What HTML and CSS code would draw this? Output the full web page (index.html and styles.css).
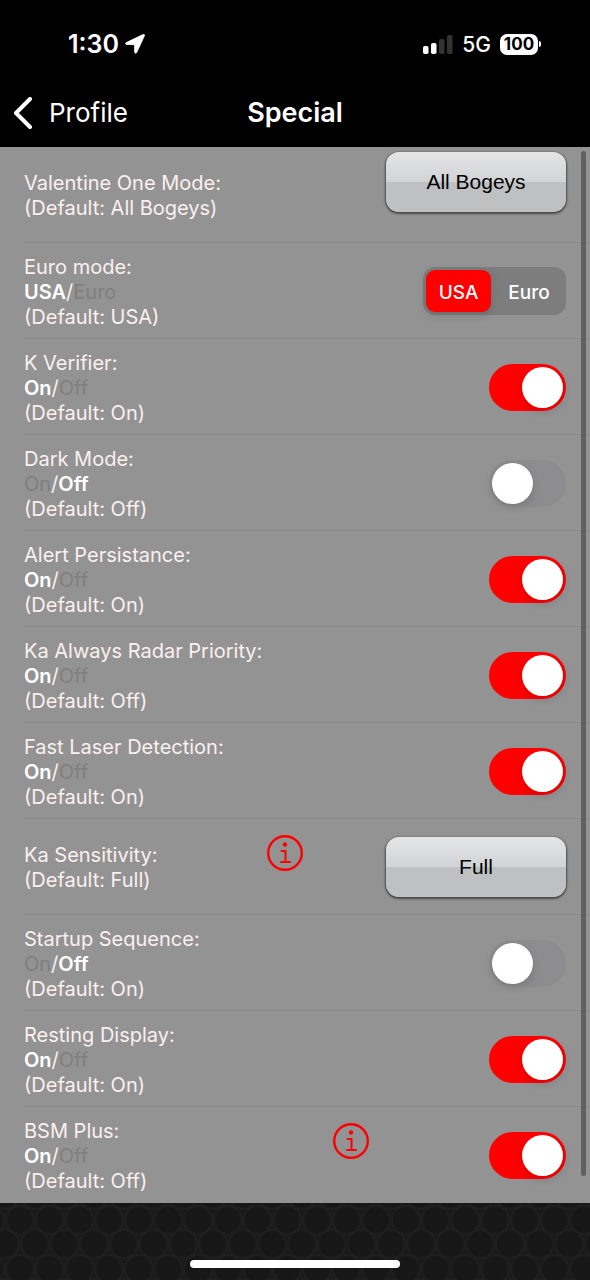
FILE: index.html
```html
<!DOCTYPE html>
<html lang="en">
<head>
<meta charset="utf-8">
<meta name="viewport" content="width=device-width, initial-scale=1">
<title>Special</title>
<link rel="stylesheet" href="styles.css">
</head>
<body>
<div class="screen">
  <div class="status-bar">
    <div class="status-left">
      <span class="clock">1:30</span>
      <svg class="location" viewBox="0 0 20 20" aria-hidden="true"><path d="M1.200 8.600 18 .6Q20 0 19.300 2L11.700 18.600Q10.600 20.200 9.600 18.300V10.700L1.600 10.500Q-.6 9.800 1.200 8.600Z" fill="#fff" stroke="#fff" stroke-width=".8" stroke-linejoin="round"/></svg>
    </div>
    <div class="status-right">
      <svg class="signal" viewBox="0 0 30 19" aria-hidden="true">
        <rect x="0" y="11" width="5.500" height="8" rx="1.800" fill="#fff"/>
        <rect x="8" y="8" width="5.500" height="11" rx="1.800" fill="#fff"/>
        <rect x="16" y="4" width="5.500" height="15" rx="1.800" fill="#333"/>
        <rect x="24" y="0" width="5.500" height="19" rx="1.800" fill="#333"/>
      </svg>
      <span class="network">5G</span>
      <span class="battery"><span class="battery-level">100</span><span class="battery-tip"></span></span>
    </div>
  </div>

  <header class="nav-bar">
    <button class="back" type="button">
      <svg class="chevron" viewBox="0 0 20 32" aria-hidden="true"><path d="M17 2 3 16 17 30" fill="none" stroke="#fff" stroke-width="4" stroke-linecap="round" stroke-linejoin="round"/></svg>
      Profile
    </button>
    <h1 class="title">Special</h1>
  </header>

  <main class="settings">
    <div class="row">
      <div class="label" id="mode">Valentine One Mode:<br>(Default: All Bogeys)</div>
      <button class="picker picker-top" type="button" aria-describedby="mode">All Bogeys</button>
    </div>
    <div class="row">
      <div class="label" id="euro">Euro mode:<br><b>USA</b>/<span class="dim">Euro</span><br>(Default: USA)</div>
      <div class="segments" role="radiogroup" aria-labelledby="euro">
        <label class="segment"><input type="radio" name="euro" checked>USA</label>
        <label class="segment"><input type="radio" name="euro">Euro</label>
      </div>
    </div>
    <div class="row">
      <label class="label" for="kverifier">K Verifier:<br><b>On</b>/<span class="dim">Off</span><br>(Default: On)</label>
      <input class="switch" id="kverifier" type="checkbox" role="switch" checked>
    </div>
    <div class="row">
      <label class="label" for="dark">Dark Mode:<br><span class="dim">On</span>/<b>Off</b><br>(Default: Off)</label>
      <input class="switch" id="dark" type="checkbox" role="switch">
    </div>
    <div class="row">
      <label class="label" for="alert">Alert Persistance:<br><b>On</b>/<span class="dim">Off</span><br>(Default: On)</label>
      <input class="switch" id="alert" type="checkbox" role="switch" checked>
    </div>
    <div class="row">
      <label class="label" for="priority">Ka Always Radar Priority:<br><b>On</b>/<span class="dim">Off</span><br>(Default: Off)</label>
      <input class="switch" id="priority" type="checkbox" role="switch" checked>
    </div>
    <div class="row">
      <label class="label" for="laser">Fast Laser Detection:<br><b>On</b>/<span class="dim">Off</span><br>(Default: On)</label>
      <input class="switch" id="laser" type="checkbox" role="switch" checked>
    </div>
    <div class="row">
      <div class="label" id="sensitivity">Ka Sensitivity:<br>(Default: Full)</div>
      <button class="info info-wide" type="button" aria-label="About Ka Sensitivity">
        <svg viewBox="0 0 36 36" aria-hidden="true"><g fill="none" stroke="#f00" stroke-width="2.400"><circle cx="18" cy="18" r="16.800"/><path d="M14.500 16h4v11M14 27h9" stroke-width="2" stroke-linecap="round" stroke-linejoin="round"/></g><circle cx="18" cy="9.500" r="2.200" fill="#f00"/></svg>
      </button>
      <button class="picker" type="button" aria-describedby="sensitivity">Full</button>
    </div>
    <div class="row">
      <label class="label" for="startup">Startup Sequence:<br><span class="dim">On</span>/<b>Off</b><br>(Default: On)</label>
      <input class="switch" id="startup" type="checkbox" role="switch">
    </div>
    <div class="row">
      <label class="label" for="resting">Resting Display:<br><b>On</b>/<span class="dim">Off</span><br>(Default: On)</label>
      <input class="switch" id="resting" type="checkbox" role="switch" checked>
    </div>
    <div class="row row-last">
      <label class="label" for="bsm">BSM Plus:<br><b>On</b>/<span class="dim">Off</span><br>(Default: Off)</label>
      <button class="info info-switch" type="button" aria-label="About BSM Plus">
        <svg viewBox="0 0 36 36" aria-hidden="true"><g fill="none" stroke="#f00" stroke-width="2.400"><circle cx="18" cy="18" r="16.800"/><path d="M14.500 16h4v11M14 27h9" stroke-width="2" stroke-linecap="round" stroke-linejoin="round"/></g><circle cx="18" cy="9.500" r="2.200" fill="#f00"/></svg>
      </button>
      <input class="switch" id="bsm" type="checkbox" role="switch" checked>
    </div>
    <div class="scrollbar"></div>
  </main>

  <footer class="footer">
    <svg class="mesh" width="100%" height="100%" aria-hidden="true">
      <defs>
        <pattern id="holes" width="30" height="49" patternUnits="userSpaceOnUse" patternTransform="translate(5 -7) scale(.99 1)">
          <rect width="30" height="49" fill="#1a1a1a"/>
          <g fill="#171717" stroke="#1e1e1e" stroke-width="2">
            <circle cx="15" cy="24" r="14"/>
            <circle cx="0" cy="48" r="14"/><circle cx="30" cy="48" r="14"/>
            <circle cx="0" cy="-1" r="14"/><circle cx="30" cy="-1" r="14"/>
          </g>
        </pattern>
      </defs>
      <rect width="100%" height="100%" fill="url(#holes)"/>
    </svg>
    <div class="home-indicator"></div>
  </footer>
</div>
</body>
</html>
```
FILE: styles.css
```css
* { box-sizing: border-box; }

body {
  margin: 0;
  background: #000;
  color: #fff;
  font-family: Inter, "Liberation Sans", sans-serif;
}

button {
  border: 0;
  padding: 0;
  background: none;
  color: inherit;
  font: inherit;
  cursor: pointer;
}

.screen {
  display: flex;
  flex-direction: column;
  min-height: 100vh;
}

/* Status bar */
.status-bar {
  display: flex;
  justify-content: space-between;
  align-items: center;
  height: 88px;
  padding: 0 49px 0 68px;
}

.status-left,
.status-right {
  display: flex;
  align-items: center;
}

.status-left { gap: 6px; }
.status-right { gap: 9px; }

.clock { font-size: 25px; font-weight: 600; }
.location { width: 20px; height: 20px; }
.signal { width: 30px; height: 19px; }
.network { font-size: 21px; font-weight: 500; }

.battery {
  display: flex;
  align-items: center;
  gap: 1px;
}

.battery-level {
  width: 38px;
  border-radius: 7px;
  background: #fff;
  color: #000;
  font-size: 17px;
  font-weight: 700;
  line-height: 21px;
  text-align: center;
}

.battery-tip {
  width: 2px;
  height: 6px;
  border-radius: 0 2px 2px 0;
  background: #fff;
}

/* Navigation bar */
.nav-bar {
  display: grid;
  grid-template-columns: 1fr auto 1fr;
  align-items: center;
  height: 59px;
  padding: 0 13px 10px;
}

.back {
  display: flex;
  align-items: center;
  justify-self: start;
  gap: 16px;
  font-size: 26px;
  line-height: 32px;
}

.chevron { width: 20px; height: 32px; }

.title {
  margin: 0;
  font-size: 27px;
  font-weight: 600;
  line-height: 32px;
}

/* Settings list */
.settings {
  position: relative;
  background: #939393;
}

.row {
  display: flex;
  align-items: center;
  min-height: 96px;
  margin-left: 24px;
  padding-right: 24px;
  border-bottom: 1px solid #888;
}

.row-last { border-bottom-color: transparent; }

.label {
  flex: 1;
  padding-top: 3px;
  color: #fbf0f0;
  font-size: 20px;
  line-height: 25px;
}

.label b { color: #fff; font-weight: 600; }
.dim { color: #7f7f7f; }

.picker {
  width: 180px;
  height: 60px;
  border-radius: 13px;
  background: linear-gradient(#e4e5e6, #d2d3d5 50%, #bfc0c2 50%, #bfc0c2);
  box-shadow: 0 1px 2px 1px rgba(0, 0, 0, .5);
  color: #000;
  font-family: "Liberation Sans", Arial, sans-serif;
  font-size: 21px;
}

.picker-top {
  align-self: flex-start;
  margin-top: 5px;
}

.segments {
  display: flex;
  gap: 4px;
  margin-top: 1px;
  padding: 3px;
  border-radius: 12px;
  background: #7d7d7d;
}

.segment {
  display: grid;
  place-items: center;
  width: 65px;
  height: 42px;
  padding-top: 2px;
  border-radius: 9px;
  font-size: 19px;
  font-weight: 500;
  cursor: pointer;
}

.segment + .segment { width: 68px; }

.segment input {
  position: absolute;
  opacity: 0;
  pointer-events: none;
}

.segment:has(input:checked) {
  background: #f00;
  box-shadow: 0 3px 10px rgba(0, 0, 0, .15);
}

.switch {
  display: flex;
  align-items: center;
  appearance: none;
  width: 77px;
  height: 47px;
  margin: 2px 0 0;
  padding: 0 3px;
  border-radius: 24px;
  background: #8d8d90;
  cursor: pointer;
}

.switch::before {
  content: "";
  width: 41px;
  height: 41px;
  border-radius: 50%;
  background: #fff;
  box-shadow: 0 3px 10px rgba(0, 0, 0, .15);
}

.switch:checked {
  justify-content: flex-end;
  background: #f00;
}

.info {
  align-self: flex-start;
  width: 36px;
  height: 36px;
  margin-top: 16px;
}

.info svg { display: block; }
.info-wide { margin-right: 83px; }
.info-switch { margin-right: 120px; }

.scrollbar {
  position: absolute;
  top: 4px;
  right: 4px;
  bottom: 27px;
  width: 5px;
  border-radius: 3px;
  background: #606060;
}

/* Footer */
.footer {
  display: flex;
  flex: 1;
  flex-direction: column;
  justify-content: flex-end;
  align-items: center;
  position: relative;
  min-height: 77px;
  padding-bottom: 12px;
  background: #1b1b1b;
}

.mesh {
  position: absolute;
  inset: 0;
}

.home-indicator {
  position: relative;
  width: 210px;
  height: 8px;
  border-radius: 4px;
  background: #fff;
}
```
